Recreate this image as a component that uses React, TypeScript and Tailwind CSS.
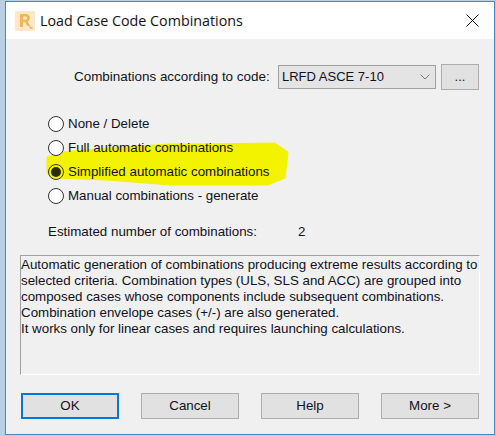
const font = { fontFamily: '"Liberation Sans", Arial, sans-serif' };

function Radio({ label, checked }: { label: string; checked?: boolean }) {
  return (
    <div className="relative flex items-center h-[24px]">
      <span
        className={`w-[16px] h-[16px] rounded-full border border-[#333333] flex items-center justify-center shrink-0 ${
          checked ? "bg-[#f3f300]" : "bg-white"
        }`}
      >
        {checked && <span className="w-[10px] h-[10px] rounded-full bg-[#2b2b00]" />}
      </span>
      <span className="ml-[4px] text-[13.33px] leading-[24px] text-[#111122]">{label}</span>
    </div>
  );
}

function Btn({ label, focus }: { label: string; focus?: boolean }) {
  return (
    <div
      className={`h-[26px] w-[98px] flex items-center justify-center text-[13.33px] text-[#111122] bg-[#e1e1e1] ${
        focus ? "border-2 border-[#0078d7]" : "border border-[#adadad]"
      }`}
    >
      {label}
    </div>
  );
}

export default function App() {
  return (
    <div className="w-[496px] h-[436px] bg-[#b9cfe4] pl-[5px] pt-[1px]" style={font}>
      <div className="w-[490px] h-[434px] border border-[#3c8bd0] bg-[#f0f0f0] flex flex-col overflow-hidden">
        <div className="h-[37px] bg-white flex items-center pl-[9px] pr-[15px] shrink-0">
          <svg width="20" height="20" viewBox="0 0 20 20" className="shrink-0">
            <rect width="20" height="20" fill="#fde9c9" />
            <path
              fillRule="evenodd"
              d="M5 3h6a4 4 0 0 1 1.5 7.6L15 15h-2.6l-2.4-4H8v5H5zM8 5.4v3.4h2.6a1.7 1.7 0 0 0 0-3.4z"
              fill="#efb658"
            />
            <path d="M14 14l2 2.5h2v1h-3z" fill="#e8a23c" />
          </svg>
          <span className="ml-[5px] text-[14.3px] text-[#111111]" style={{ fontFamily: '"Open Sans", "Liberation Sans", sans-serif' }}>
            Load Case Code Combinations
          </span>
          <svg width="13" height="13" viewBox="0 0 13 13" className="ml-auto">
            <path d="M0.5 0.5L12.5 12.5M12.5 0.5L0.5 12.5" stroke="#111111" strokeWidth="1" fill="none" />
          </svg>
        </div>
        <div className="flex-1 flex flex-col pl-[14px] pr-[6px]">
          <div className="flex items-center h-[26px] mt-[25px]">
            <span className="ml-[54px] text-[13.45px] text-[#111122] w-[204px] whitespace-nowrap">Combinations according to code:</span>
            <div className="w-[158px] h-[24px] border border-[#a0a0a0] bg-[#e4e4e4] flex items-center pl-[3px] pr-[4px] text-[13px] text-[#111122]">
              LRFD ASCE 7-10
              <svg width="10" height="6" viewBox="0 0 10 6" className="ml-auto mr-[1px]">
                <path d="M0.5 0.5L5 5L9.5 0.5" stroke="#777777" fill="none" />
              </svg>
            </div>
            <div className="ml-[5px] w-[38px] h-[26px] border border-[#adadad] bg-[#e1e1e1] flex items-center justify-center text-[13px] text-[#111122]">
              ...
            </div>
          </div>

          <div className="relative mt-[22px] ml-[28px] flex flex-col">
            <svg width="250" height="50" viewBox="0 0 250 50" className="absolute left-[-4px] top-[28px]">
              <path
                d="M3 17L19 12L39 10L126 4L161 4L231 3L244 12L241 38L224 45L126 45L63 40L13 38L3 33Z"
                fill="#f3f300"
                stroke="#f3f300"
                strokeLinejoin="round"
              />
            </svg>
            <Radio label="None / Delete" />
            <Radio label="Full automatic combinations" />
            <Radio label="Simplified automatic combinations" checked />
            <Radio label="Manual combinations - generate" />
          </div>

          <div className="flex items-center h-[20px] mt-[14px] ml-[28px] text-[13.33px] text-[#111122]">
            <span className="w-[250px]">Estimated number of combinations:</span>
            <span>2</span>
          </div>

          <div className="mt-[13px] w-[460px] h-[120px] border border-[#a0a0a0] border-r-white border-b-white text-[13.33px] leading-[16px] text-[#111122] whitespace-nowrap">
            <div className="pt-[1px]">Automatic generation of combinations producing extreme results according to</div>
            <div>selected criteria. Combination types (ULS, SLS and ACC) are grouped into</div>
            <div>composed cases whose components include subsequent combinations.</div>
            <div>Combination envelope cases (+/-) are also generated.</div>
            <div>It works only for linear cases and requires launching calculations.</div>
          </div>

          <div className="mt-[18px] flex justify-between w-[458px] ml-[1px]">
            <Btn label="OK" focus />
            <Btn label="Cancel" />
            <Btn label="Help" />
            <Btn label="More >" />
          </div>
        </div>
      </div>
    </div>
  );
}
